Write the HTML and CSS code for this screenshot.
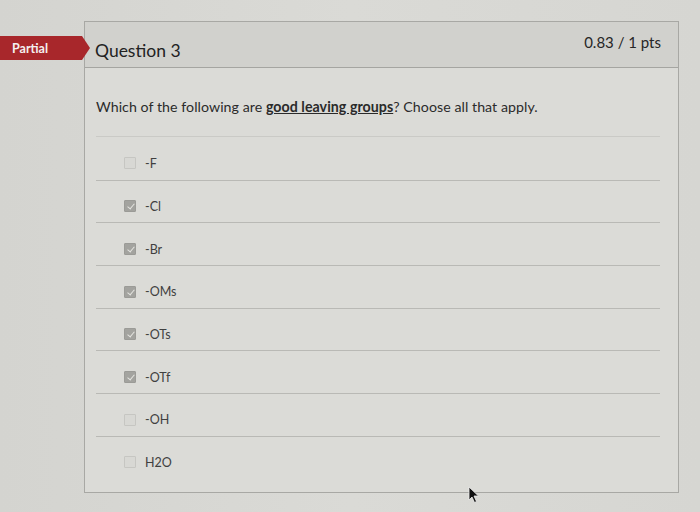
FILE: index.html
```html
<!DOCTYPE html>
<html>
<head>
<meta charset="utf-8">
<link rel="stylesheet" href="styles.css">
</head>
<body>
<div class="page">
  <div class="badge"><span>Partial</span></div>
  <div class="card">
    <div class="card-header">
      <div class="title">Question 3</div>
      <div class="pts">0.83 / 1 pts</div>
    </div>
    <div class="card-body">
      <div class="question">Which of the following are <span class="key">good leaving groups</span>? Choose all that apply.</div>
      <div class="options">
        <div class="option"><span class="box"></span><span class="label">-F</span></div>
        <div class="option"><span class="box checked"></span><span class="label">-Cl</span></div>
        <div class="option"><span class="box checked"></span><span class="label">-Br</span></div>
        <div class="option"><span class="box checked"></span><span class="label">-OMs</span></div>
        <div class="option"><span class="box checked"></span><span class="label">-OTs</span></div>
        <div class="option"><span class="box checked"></span><span class="label">-OTf</span></div>
        <div class="option"><span class="box"></span><span class="label">-OH</span></div>
        <div class="option"><span class="box"></span><span class="label">H2O</span></div>
      </div>
    </div>
  </div>
  <svg class="cursor" width="12" height="18" viewBox="0 0 12 18"><path d="M1 1 L1 14 L4 11 L6.5 16.5 L8.5 15.5 L6 10 L10.5 10 Z" fill="#111" stroke="#eee" stroke-width="0.8"/></svg>
</div>
</body>
</html>
```

FILE: styles.css
```css
html, body {
  margin: 0;
  padding: 0;
}
body {
  background: #d6d6d2;
  font-family: Lato, "Open Sans", sans-serif;
  width: 700px;
  height: 512px;
  overflow: hidden;
}
.page {
  position: relative;
  width: 700px;
  height: 512px;
  padding-top: 21px;
  box-sizing: border-box;
  background: linear-gradient(90deg, #d4d4d0 0%, #dadad6 50%, #d6d6d2 100%);
}
.card {
  margin-left: 84px;
  width: 595px;
  height: 472px;
  box-sizing: border-box;
  border: 1px solid #a8a8a4;
  background: #dbdbd7;
}
.card-header {
  height: 46px;
  box-sizing: border-box;
  background: #d1d1cd;
  border-bottom: 1px solid #a5a5a1;
  display: flex;
  justify-content: space-between;
  align-items: flex-start;
  padding: 0 17px 0 10px;
}
.title {
  font-size: 17.5px;
  color: #222;
  margin-top: 18px;
}
.pts {
  font-size: 15px;
  color: #262626;
  margin-top: 11px;
}
.card-body {
  padding: 0 18px 0 11px;
}
.question {
  font-size: 14.2px;
  color: #2b2b2b;
  padding-top: 30px;
  height: 38px;
  line-height: 18px;
  box-sizing: content-box;
  letter-spacing: 0.05px;
}
.key {
  font-weight: 700;
  text-decoration: underline;
  color: #2a2a2a;
}
.options {
  display: flex;
  flex-direction: column;
}
.option {
  height: 42.7px;
  box-sizing: border-box;
  border-top: 1px solid #b9b9b5;
  display: flex;
  align-items: center;
  padding: 10px 0 0 28px;
  gap: 9px;
}
.option:first-child {
  border-top-color: #cacac6;
  height: 43.5px;
}
.box {
  width: 12px;
  height: 12px;
  box-sizing: border-box;
  border: 1px solid #c6c6c2;
  background: #d8d8d4;
  border-radius: 1px;
  position: relative;
}
.box.checked {
  background: #a3a39f;
  border-color: #9b9b97;
}
.box.checked::after {
  content: "";
  position: absolute;
  left: 3.5px;
  top: 1px;
  width: 3px;
  height: 6px;
  border: solid #e4e4e0;
  border-width: 0 1.5px 1.5px 0;
  transform: rotate(40deg);
}
.label {
  font-size: 12.5px;
  color: #404040;
}
.badge {
  position: absolute;
  left: 0;
  top: 36px;
  width: 90px;
  height: 24px;
  background: #a8272b;
  clip-path: polygon(0 0, 82px 0, 90px 50%, 82px 100%, 0 100%);
  display: flex;
  align-items: center;
  padding-left: 12px;
  box-sizing: border-box;
}
.badge span {
  color: #f4f0f0;
  font-weight: 700;
  font-size: 12.5px;
}
.cursor {
  position: absolute;
  left: 468px;
  top: 486px;
}
```
